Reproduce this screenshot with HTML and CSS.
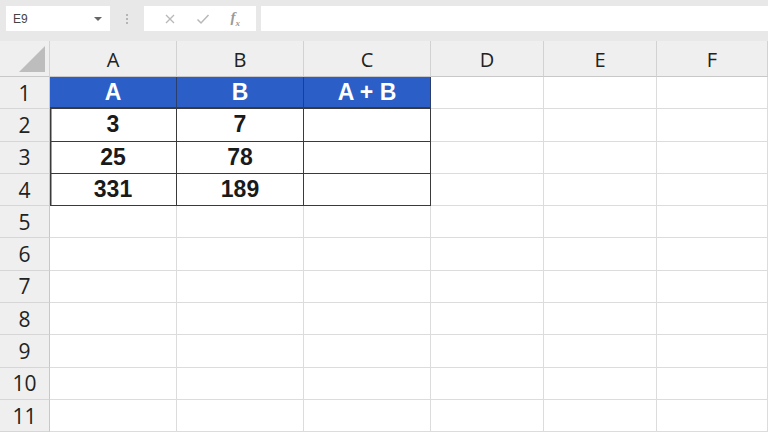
FILE: index.html
```html
<!DOCTYPE html>
<html>
<head>
<meta charset="utf-8">
<link rel="stylesheet" href="styles.css">
</head>
<body>
<div class="toolbar">
  <div class="namebox"><span class="nb-text">E9</span><span class="caret"></span></div>
  <div class="dots"><i></i><i></i><i></i></div>
  <div class="fbtns">
    <svg class="ico" width="12" height="12" viewBox="0 0 12 12"><path d="M2 2L10 10M10 2L2 10" stroke="#b8b8b8" stroke-width="1.3" fill="none"/></svg>
    <svg class="ico" width="14" height="12" viewBox="0 0 14 12"><path d="M1.5 6.5L5 10L12.5 2" stroke="#b8b8b8" stroke-width="1.5" fill="none"/></svg>
    <span class="fx"><i>f</i><sub>x</sub></span>
  </div>
  <div class="fbar"></div>
</div>
<div class="sheet">
  <div class="corner"><span class="tri"></span></div>
  <div class="ch">A</div><div class="ch">B</div><div class="ch">C</div><div class="ch">D</div><div class="ch">E</div><div class="ch">F</div>

  <div class="rh">1</div>
  <div class="c hd ca">A</div><div class="c hd">B</div><div class="c hd">A + B</div><div class="c"></div><div class="c"></div><div class="c"></div>

  <div class="rh">2</div>
  <div class="c t ca">3</div><div class="c t">7</div><div class="c t"></div><div class="c"></div><div class="c"></div><div class="c"></div>

  <div class="rh">3</div>
  <div class="c t ca">25</div><div class="c t">78</div><div class="c t"></div><div class="c"></div><div class="c"></div><div class="c"></div>

  <div class="rh">4</div>
  <div class="c t ca">331</div><div class="c t">189</div><div class="c t"></div><div class="c"></div><div class="c"></div><div class="c"></div>

  <div class="rh">5</div>
  <div class="c"></div><div class="c"></div><div class="c"></div><div class="c"></div><div class="c"></div><div class="c"></div>
  <div class="rh">6</div>
  <div class="c"></div><div class="c"></div><div class="c"></div><div class="c"></div><div class="c"></div><div class="c"></div>
  <div class="rh">7</div>
  <div class="c"></div><div class="c"></div><div class="c"></div><div class="c"></div><div class="c"></div><div class="c"></div>
  <div class="rh">8</div>
  <div class="c"></div><div class="c"></div><div class="c"></div><div class="c"></div><div class="c"></div><div class="c"></div>
  <div class="rh">9</div>
  <div class="c"></div><div class="c"></div><div class="c"></div><div class="c"></div><div class="c"></div><div class="c"></div>
  <div class="rh">10</div>
  <div class="c"></div><div class="c"></div><div class="c"></div><div class="c"></div><div class="c"></div><div class="c"></div>
  <div class="rh">11</div>
  <div class="c"></div><div class="c"></div><div class="c"></div><div class="c"></div><div class="c"></div><div class="c"></div>
</div>
</body>
</html>
```
FILE: styles.css
```css
html, body { margin: 0; padding: 0; }
body {
  width: 768px; height: 432px; overflow: hidden;
  background: #ffffff;
  font-family: "Open Sans", "Noto Sans", sans-serif;
}
.toolbar {
  height: 41px;
  background: #e8e8e8;
  display: flex;
  align-items: flex-start;
  padding-top: 6px;
  box-sizing: border-box;
}
.namebox {
  margin-left: 6px;
  width: 104px; height: 25px;
  background: #fff;
  display: flex; align-items: center; justify-content: space-between;
  padding: 0 8px 0 7px;
  box-sizing: border-box;
  font-size: 12px; color: #444;
  font-family: "Liberation Sans", sans-serif;
}
.caret {
  width: 0; height: 0;
  border-left: 4px solid transparent;
  border-right: 4px solid transparent;
  border-top: 4px solid #666;
}
.dots {
  width: 34px; height: 25px;
  display: flex; flex-direction: column; align-items: center; justify-content: center; gap: 2px;
}
.dots i { width: 2px; height: 2px; background: #b5b5b5; display: block; }
.fbtns {
  width: 112px; height: 25px;
  background: #fff;
  display: flex; align-items: center; justify-content: space-around;
  padding: 0 6px 0 10px; box-sizing: border-box;
}
.fx { font-family: "Liberation Serif", serif; color: #9a9a9a; font-size: 15px; font-weight: bold; }
.fx sub { font-size: 9px; font-style: italic; }
.fbar {
  margin-left: 5px;
  flex: 1; height: 25px; background: #fff;
}
.sheet {
  display: grid;
  grid-template-columns: 50px 127px 127px 127px 113px 113px 111px;
  grid-template-rows: 36px repeat(11, 32.3px);
}
.corner {
  background: #efefef;
  border-right: 1px solid #d4d4d4;
  border-bottom: 1px solid #c8c8c8;
  position: relative;
}
.tri {
  position: absolute; right: 4px; bottom: 4px;
  width: 0; height: 0;
  border-left: 26px solid transparent;
  border-bottom: 26px solid #bdbdbd;
}
.ch {
  background: #efefef;
  border-right: 1px solid #d2d2d2;
  border-bottom: 1px solid #c8c8c8;
  display: flex; align-items: center; justify-content: center;
  font-size: 20px; color: #222;
  padding-top: 2px; box-sizing: border-box;
}
.rh {
  background: #efefef;
  border-right: 1px solid #c8c8c8;
  border-bottom: 1px solid #d6d6d6;
  display: flex; align-items: center; justify-content: center;
  font-size: 21px; color: #222;
}
.c {
  border-right: 1px solid #dcdcdc;
  border-bottom: 1px solid #dcdcdc;
  display: flex; align-items: center; justify-content: center;
  font-family: "Liberation Sans", Arial, sans-serif;
  font-weight: bold; font-size: 23px; color: #1a1a1a;
}
.hd {
  background: #2b5fc7;
  color: #fff;
  border-right: 1px solid #2a3f6e;
  border-bottom: 2px solid #3a3a3a;
}
.t {
  border-right: 1.5px solid #3a3a3a;
  border-bottom: 1.5px solid #3a3a3a;
}
.t.ca { box-shadow: inset 1.5px 0 0 #3a3a3a; }
```
